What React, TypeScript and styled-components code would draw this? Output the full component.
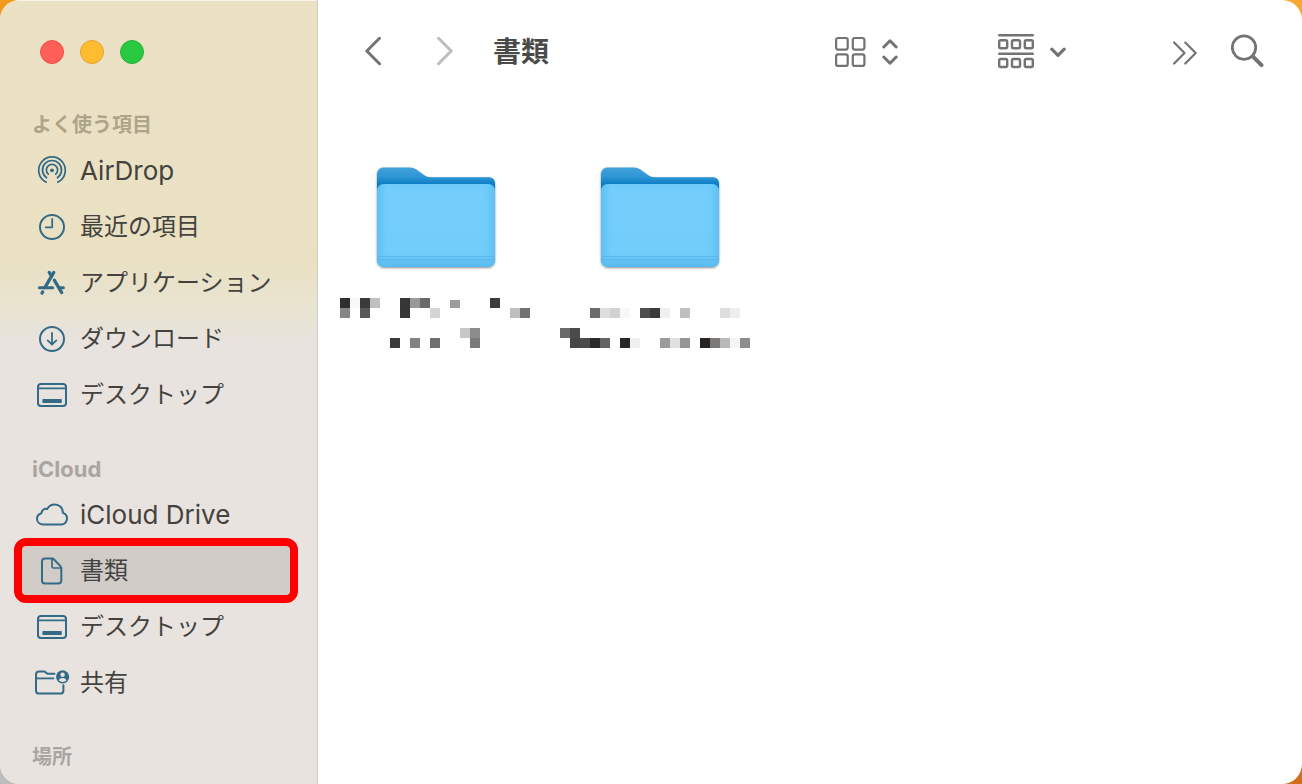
import React from "react";
import styled, { createGlobalStyle, css } from "styled-components";

const GlobalStyle = createGlobalStyle`
  *, *::before, *::after { box-sizing: border-box; }
  body { margin: 0; }
  button { font: inherit; color: inherit; border: 0; background: none; padding: 0; margin: 0; }
`;

const Desktop = styled.div`
  min-height: 100vh;
  display: flex;
  font-family: Inter, "Noto Sans CJK JP", sans-serif;
  background:
    linear-gradient(#f7a62f, #f7a62f) top right / 50% 50% no-repeat,
    linear-gradient(#f39a1d, #f39a1d) top left / 50% 50% no-repeat,
    linear-gradient(#bdbdbd, #bdbdbd) bottom left / 50% 50% no-repeat,
    linear-gradient(#d46d17, #d46d17) bottom right / 50% 50% no-repeat;
`;

const Window = styled.div`
  flex: 1;
  display: flex;
  border-radius: 20px;
  overflow: hidden;
  background: #ffffff;
`;

const Sidebar = styled.aside`
  width: 318px;
  flex: none;
  background: linear-gradient(#ebe2c6 0, #eae1c3 260px, #e9e3d0 305px, #e8e3df 345px, #e8e3df 100%);
  border-right: 1px solid #cfcac3;
  box-shadow: inset 0 1px 0 #f8f5ec;
`;

const WindowControls = styled.div`
  display: flex;
  gap: 16px;
  padding: 40px 40px 43px;
`;

const Light = styled.button<{ $fill: string; $edge: string }>`
  width: 24px;
  height: 24px;
  border-radius: 50%;
  background: ${(p) => p.$fill};
  border: 1px solid ${(p) => p.$edge};
`;

const Section = styled.section`
  padding: 0 19px 0 20px;
  & + & { margin-top: 28px; }
`;

const SectionTitle = styled.h2<{ $warm?: boolean; $latin?: boolean }>`
  margin: 0;
  padding-left: 12px;
  height: 36px;
  line-height: 36px;
  font-size: ${(p) => (p.$latin ? 22 : 20)}px;
  font-weight: 700;
  color: ${(p) => (p.$warm ? "#aea488" : "#aaa5a1")};
`;

const List = styled.ul`
  list-style: none;
  margin: 0;
  padding: 0;
`;

const Row = styled.button<{ $selected?: boolean; $latin?: boolean }>`
  position: relative;
  width: 100%;
  height: 56px;
  padding-left: 14px;
  display: flex;
  align-items: center;
  gap: 10px;
  text-align: left;
  white-space: nowrap;
  font-size: ${(p) => (p.$latin ? 26 : 24)}px;
  line-height: 36px;
  color: #44423e;
  svg { flex: none; }
  ${(p) =>
    p.$selected &&
    css`
      background: #d1ccc8;
      border-radius: 10px;
      &::after {
        content: "";
        position: absolute;
        inset: -5px 0 -4px -6px;
        border: 8px solid #ff0000;
        border-radius: 12px;
      }
    `}
`;

const Main = styled.main`
  flex: 1;
  min-width: 0;
`;

const Toolbar = styled.header`
  height: 104px;
  display: flex;
  align-items: center;
  padding: 0 38px 0 47px;
  color: #737373;
`;

const ToolGroup = styled.div<{ $gap: number; $end?: boolean }>`
  display: flex;
  align-items: center;
  gap: ${(p) => p.$gap}px;
  margin-left: ${(p) => (p.$end ? "auto" : "0")};
`;

const ToolButton = styled.button`
  display: flex;
  align-items: center;
  gap: 16px;
  &:disabled { color: #bdbdbd; }
`;

const MoreButton = styled(ToolButton)`
  margin-left: 107px;
`;

const Title = styled.h1`
  margin: 0 0 0 40px;
  font-size: 28px;
  line-height: 40px;
  font-weight: 700;
  color: #4a4a48;
`;

const Files = styled.div`
  display: flex;
  flex-wrap: wrap;
  padding: 56px 6px;
`;

const FileItem = styled.button`
  width: 224px;
  display: flex;
  flex-direction: column;
  align-items: center;
  gap: 26px;
`;

const stroke = {
  fill: "none",
  stroke: "currentColor",
  strokeLinecap: "round" as const,
  strokeLinejoin: "round" as const,
};

const Glyph = ({ children }: { children: React.ReactNode }) => (
  <svg width="36" height="36" viewBox="0 0 36 36" color="#336b87" {...stroke} strokeWidth="2" aria-hidden="true">
    {children}
  </svg>
);

const AirDropIcon = () => (
  <Glyph>
    <g strokeWidth="1.7">
      <path d="M12.3 29.2A13.3 13.3 0 1 1 23.7 29.2" />
      <path d="M12.6 24.8A9.5 9.5 0 1 1 23.4 24.8" />
      <path d="M14.3 21.2A5.6 5.6 0 1 1 21.7 21.2" />
    </g>
    <circle cx="18" cy="17.3" r="1.9" fill="currentColor" stroke="none" />
  </Glyph>
);

const ClockIcon = () => (
  <Glyph>
    <circle cx="18" cy="18" r="12" />
    <path d="M18.2 10V18.3H11.7" strokeWidth="1.8" />
  </Glyph>
);

const AppsIcon = () => (
  <Glyph>
    <g strokeWidth="3.3">
      <path d="M19.8 7.4L10.8 22.6" />
      <path d="M15.2 7.4L17.6 11.2" />
      <path d="M20.3 15.2L27.7 27.6" />
      <path d="M5.4 22.8H18.7M25.5 22.8H29.4" strokeWidth="3" />
      <path d="M8.7 26.9L8 28" />
    </g>
  </Glyph>
);

const DownloadIcon = () => (
  <Glyph>
    <circle cx="18" cy="18" r="12" />
    <path d="M18 12V23.4M13.7 19.4L18 23.6L22.3 19.4" strokeWidth="1.8" />
  </Glyph>
);

const DesktopIcon = () => (
  <Glyph>
    <rect x="4" y="7" width="28" height="22" rx="3" />
    <path d="M4.5 11.4H31.5" strokeWidth="1.6" />
    <rect x="8.4" y="22" width="19.4" height="4" rx="0.8" fill="currentColor" stroke="none" />
  </Glyph>
);

const CloudIcon = () => (
  <Glyph>
    <path d="M9.4 27.4H27.2A5.9 5.9 0 0 0 28.9 15.9C28.9 10.7 25.3 7.4 20.9 7.4C17.3 7.4 14.6 9.1 13.2 12C10.2 11.3 7.6 13.1 7.4 16.3C4.6 17.1 3 19.1 3 21.7C3 24.9 5.6 27.4 9.4 27.4Z" />
  </Glyph>
);

const DocumentIcon = () => (
  <Glyph>
    <path d="M18.2 5.6H11C9 5.6 8 6.7 8 8.6V27.4C8 29.3 9 30.4 11 30.4H24.2C26.2 30.4 27.3 29.3 27.3 27.4V15C27.3 14.2 27 13.8 26.4 13.1L20.3 6.7C19.6 6 19.1 5.6 18.2 5.6Z" />
    <path d="M18 6V13.4C18 14.6 18.5 15 19.6 15H27" strokeWidth="1.7" />
  </Glyph>
);

const SharedIcon = () => (
  <Glyph>
    <path d="M20.5 8.7H13.8C12.4 8.7 11.8 6.6 9.8 6.6H5.2C3 6.6 2 7.6 2 9.8V25.4C2 27.6 3.1 28.6 5.2 28.6H26.3C28.4 28.6 29.4 27.6 29.4 25.4V20.2" />
    <path d="M2.5 13.4H20.3" strokeLinecap="butt" strokeWidth="1.8" />
    <circle cx="28.6" cy="11.8" r="6.6" fill="currentColor" stroke="none" />
    <circle cx="28.6" cy="9.8" r="2.2" fill="#e8e3df" stroke="none" />
    <path d="M24.8 15.6C25.3 13.8 26.7 13 28.6 13S31.9 13.8 32.4 15.6C30.3 17.5 26.9 17.5 24.8 15.6Z" fill="#e8e3df" stroke="none" />
  </Glyph>
);

type Item = { label: string; icon: React.ReactNode; latin?: boolean; selected?: boolean };

const favorites: Item[] = [
  { label: "AirDrop", icon: <AirDropIcon />, latin: true },
  { label: "最近の項目", icon: <ClockIcon /> },
  { label: "アプリケーション", icon: <AppsIcon /> },
  { label: "ダウンロード", icon: <DownloadIcon /> },
  { label: "デスクトップ", icon: <DesktopIcon /> },
];

const cloud: Item[] = [
  { label: "iCloud Drive", icon: <CloudIcon />, latin: true },
  { label: "書類", icon: <DocumentIcon />, selected: true },
  { label: "デスクトップ", icon: <DesktopIcon /> },
  { label: "共有", icon: <SharedIcon /> },
];

const ItemList = ({ items }: { items: Item[] }) => (
  <List>
    {items.map((item) => (
      <li key={item.label}>
        <Row type="button" $latin={item.latin} $selected={item.selected} aria-current={item.selected ? "page" : undefined}>
          {item.icon}
          {item.label}
        </Row>
      </li>
    ))}
  </List>
);

const FolderIcon = () => (
  <svg width="128" height="112" viewBox="0 0 128 112" aria-hidden="true">
    <defs>
      <linearGradient id="folderBack" x1="0" y1="7" x2="0" y2="26" gradientUnits="userSpaceOnUse">
        <stop offset="0" stopColor="#43a3dc" />
        <stop offset="0.5" stopColor="#2e96d4" />
        <stop offset="0.9" stopColor="#0b7fc6" />
      </linearGradient>
      <linearGradient id="folderFront" x1="0" y1="24" x2="0" y2="107" gradientUnits="userSpaceOnUse">
        <stop offset="0" stopColor="#6ccbfa" />
        <stop offset="0.1" stopColor="#74cefb" />
        <stop offset="0.84" stopColor="#73cdfa" />
        <stop offset="0.9" stopColor="#69c4f3" />
        <stop offset="1" stopColor="#55b8ed" />
      </linearGradient>
      <linearGradient id="folderSides">
        <stop offset="0" stopColor="#54bbf2" stopOpacity="0.8" />
        <stop offset="0.06" stopColor="#5fc3f7" stopOpacity="0.35" />
        <stop offset="0.12" stopColor="#74cefb" stopOpacity="0" />
        <stop offset="0.88" stopColor="#74cefb" stopOpacity="0" />
        <stop offset="0.94" stopColor="#5fc3f7" stopOpacity="0.35" />
        <stop offset="1" stopColor="#54bbf2" stopOpacity="0.8" />
      </linearGradient>
      <filter id="folderShadow" x="-10%" y="-10%" width="120%" height="120%">
        <feDropShadow dx="0" dy="1" stdDeviation="1" floodColor="#000000" floodOpacity="0.45" />
      </filter>
    </defs>
    <g filter="url(#folderShadow)">
      <path d="M5 15C5 10 7.5 7.5 12 7.5H38C41 7.5 43 8.5 45 10L52 15C54 16.5 56 17.2 59 17.2H116C121 17.2 123 19.5 123 24V60H5Z" fill="url(#folderBack)" />
      <rect x="5" y="24" width="118" height="83" rx="7" fill="url(#folderFront)" />
    </g>
    <rect x="5" y="24" width="118" height="83" rx="7" fill="url(#folderSides)" />
    <path d="M6 96.5H122M6 99.5H122" stroke="#54b7ea" strokeOpacity="0.75" />
  </svg>
);

type Tile = [x: number, y: number, tone: string];

/* Ten-pixel tiles that hide each folder's name. */
const namesHidden: Tile[][] = [
  [
    [4, 0, "#2f2f2f"], [14, 0, "#f8f8f8"], [24, 0, "#3b3b3b"], [34, 0, "#c0c0c0"],
    [4, 10, "#868686"], [24, 10, "#5a5a5a"],
    [64, 0, "#363636"], [64, 10, "#363636"], [74, 0, "#999999"], [84, 0, "#6a6a6a"], [94, 10, "#d5d5d5"],
    [154, 0, "#3c3c3c"], [174, 10, "#bebebe"], [184, 10, "#727272"],
    [54, 40, "#3a3a3a"], [74, 40, "#828282"], [94, 40, "#6f6f6f"],
    [124, 30, "#c7c9c8"], [134, 30, "#8c8c8c"], [134, 40, "#7a7a7a"],
  ],
  [
    [30, 10, "#6c6c6c"], [40, 10, "#dedede"], [50, 10, "#d2d2d2"], [60, 10, "#f8f8f8"],
    [80, 10, "#4f4f4f"], [90, 10, "#3a3a3a"], [100, 10, "#efefef"], [120, 10, "#bfbfbf"],
    [160, 10, "#dedede"], [170, 10, "#eeeeee"],
    [0, 30, "#6a6a6a"], [10, 30, "#4b4b4b"],
    [10, 40, "#494745"], [20, 40, "#4c4c4a"], [30, 40, "#2a2a2a"], [40, 40, "#656463"],
    [60, 40, "#282828"], [70, 40, "#f0f0f0"],
    [100, 40, "#9b9b9b"], [110, 40, "#e1e1e1"], [120, 40, "#969594"],
    [140, 40, "#262626"], [150, 40, "#7c7976"], [160, 40, "#b9b9b9"], [170, 40, "#f5f5f5"], [180, 40, "#8d8d8d"],
  ],
];

const HiddenName = ({ tiles, half }: { tiles: Tile[]; half?: boolean }) => (
  <svg width="200" height="50" viewBox="0 0 200 50" shapeRendering="crispEdges" aria-hidden="true">
    {tiles.map(([x, y, tone]) => (
      <rect key={`${x}-${y}`} x={x} y={y} width="10" height="10" fill={tone} />
    ))}
    {half && <rect x="114" y="2" width="10" height="8" fill="#9c9c9c" />}
  </svg>
);

export default function App() {
  return (
    <>
      <GlobalStyle />
      <Desktop lang="ja">
        <Window>
          <Sidebar>
            <WindowControls>
              <Light type="button" aria-label="閉じる" $fill="#ff5f57" $edge="#e9504b" />
              <Light type="button" aria-label="しまう" $fill="#febc2e" $edge="#e2a130" />
              <Light type="button" aria-label="フルスクリーン" $fill="#28c840" $edge="#25b13a" />
            </WindowControls>
            <nav>
              <Section>
                <SectionTitle $warm>よく使う項目</SectionTitle>
                <ItemList items={favorites} />
              </Section>
              <Section>
                <SectionTitle $latin>iCloud</SectionTitle>
                <ItemList items={cloud} />
              </Section>
              <Section>
                <SectionTitle>場所</SectionTitle>
              </Section>
            </nav>
          </Sidebar>
          <Main>
            <Toolbar>
              <ToolGroup $gap={56}>
                <ToolButton type="button" aria-label="戻る">
                  <svg width="16" height="32" viewBox="0 0 16 32" {...stroke} strokeWidth="3">
                    <path d="M14.5 2.3L1.8 15L14.5 27.7" />
                  </svg>
                </ToolButton>
                <ToolButton type="button" aria-label="進む" disabled>
                  <svg width="16" height="32" viewBox="0 0 16 32" {...stroke} strokeWidth="3">
                    <path d="M1.5 2.3L14.2 15L1.5 27.7" />
                  </svg>
                </ToolButton>
              </ToolGroup>
              <Title>書類</Title>
              <ToolGroup $gap={100} $end>
                <ToolButton type="button" aria-label="表示方法">
                  <svg width="31" height="32" viewBox="0 0 31 32" {...stroke} strokeWidth="2.2">
                    <rect x="1.1" y="2" width="11.6" height="11.6" rx="2" />
                    <rect x="17.8" y="2" width="11.6" height="11.6" rx="2" />
                    <rect x="1.1" y="18.3" width="11.6" height="11.6" rx="2" />
                    <rect x="17.8" y="18.3" width="11.6" height="11.6" rx="2" />
                  </svg>
                  <svg width="16" height="32" viewBox="0 0 16 32" {...stroke} strokeWidth="3">
                    <path d="M1.8 11L8 4.8L14.2 11M1.8 21L8 27.2L14.2 21" />
                  </svg>
                </ToolButton>
                <ToolButton type="button" aria-label="グループ">
                  <svg width="36" height="36" viewBox="0 0 36 36" {...stroke} strokeWidth="2.4">
                    <path d="M1.2 1H34.8M1.2 19.5H34.8" transform="translate(0 .3)" />
                    {[6.2, 25].map((y) =>
                      [1.2, 14, 26.8].map((x) => (
                        <rect key={`${x}-${y}`} x={x} y={y} width="8" height="8" rx="1.5" />
                      ))
                    )}
                  </svg>
                  <svg width="16" height="32" viewBox="0 0 16 32" {...stroke} strokeWidth="3.2">
                    <path d="M1.8 13.2L8 19.4L14.2 13.2" />
                  </svg>
                </ToolButton>
              </ToolGroup>
              <ToolGroup $gap={34}>
                <MoreButton type="button" aria-label="その他">
                  <svg width="24" height="32" viewBox="0 0 24 32" {...stroke} strokeWidth="2.2">
                    <path d="M1.1 6.5L11.5 17L1.1 27.5M12.3 6.5L22.7 17L12.3 27.5" />
                  </svg>
                </MoreButton>
                <ToolButton type="button" aria-label="検索">
                  <svg width="33" height="36" viewBox="0 0 33 36" {...stroke}>
                    <circle cx="13" cy="13.6" r="11.7" strokeWidth="2.8" />
                    <path d="M21.8 22.4L30.5 31.1" strokeWidth="4" />
                  </svg>
                </ToolButton>
              </ToolGroup>
            </Toolbar>
            <Files>
              {namesHidden.map((tiles, i) => (
                <FileItem key={i} type="button" aria-label={`フォルダ ${i + 1}`}>
                  <FolderIcon />
                  <HiddenName tiles={tiles} half={i === 0} />
                </FileItem>
              ))}
            </Files>
          </Main>
        </Window>
      </Desktop>
    </>
  );
}
